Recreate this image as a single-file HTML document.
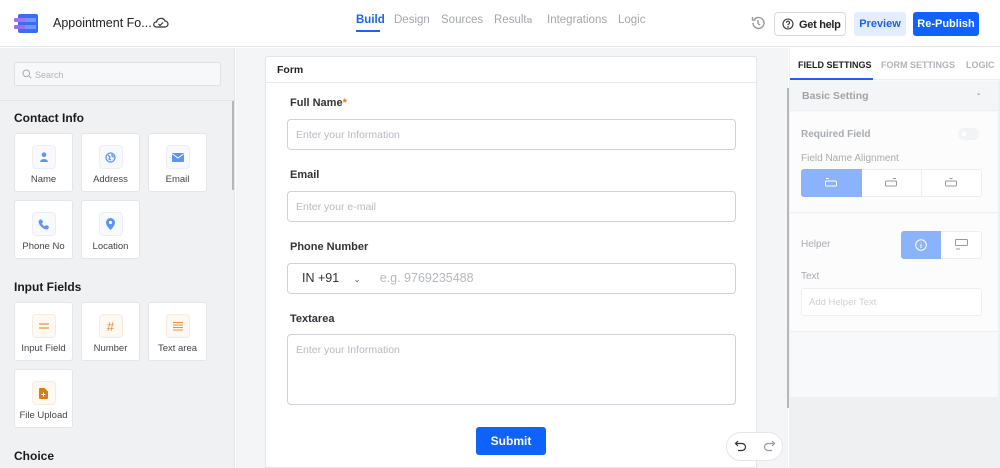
<!DOCTYPE html>
<html><head><meta charset="utf-8"><style>
*{box-sizing:border-box;margin:0;padding:0}
body{width:1000px;height:468px;overflow:hidden;font-family:"Liberation Sans",sans-serif;background:#fff;position:relative;color:#222}
.abs{position:absolute}
.hdr{left:0;top:0;width:1000px;height:47px;background:#fff;border-bottom:1px solid #e6e8eb}
.tab{top:14px;font-size:11.5px;color:#a3a7ad}
.left{left:0;top:48px;width:235px;height:420px;background:#f0f1f3;border-right:1px solid #e3e5e8}
.card{position:absolute;width:59px;height:59px;background:#fff;border:1px solid #e3e5e9;border-radius:3px;text-align:center;font-size:9.5px;color:#444}
.card .ic{width:24px;height:24px;margin:11px auto 5px;border:1px solid #eceef2;border-radius:4px;background:#f7f9fc;display:flex;align-items:center;justify-content:center}
.card .ic.o{background:#fdf8f2;border-color:#f5ece0}
.sec{font-size:12px;font-weight:bold;color:#1a1a1a;left:14px}
.center{left:236px;top:48px;width:552px;height:420px;background:#f4f5f7}
.form{left:265px;top:56px;width:492px;height:412px;background:#fff;border:1px solid #e3e5e9;border-radius:3px 3px 0 0}
.lbl{font-size:11px;font-weight:bold;color:#333;left:290px}
.inp{left:287px;width:449px;height:31px;border:1px solid #cfd2da;border-radius:4px;font-size:10.5px;color:#b5b9c3;padding:9px 8px}
.right{left:789px;top:48px;width:211px;height:420px;background:#eff0f2}
</style></head><body>
<div class="abs hdr"></div>
<svg class="abs" style="left:13px;top:13px" width="26" height="22"><rect x="5" y="1" width="20" height="19" rx="2" fill="#3b6cf6"/><rect x="1" y="5" width="12" height="4" rx="1" fill="#b06cf0"/><rect x="1" y="12" width="12" height="4" rx="1" fill="#9b6cf4"/><rect x="12" y="5" width="11" height="4" fill="#6f98fa"/><rect x="12" y="12" width="11" height="4" fill="#6f98fa"/></svg>
<div class="abs" style="left:53px;top:16px;font-size:12.5px;color:#222">Appointment Fo...</div>
<svg class="abs" style="left:152px;top:16px" width="17" height="14" fill="none" stroke="#333" stroke-width="1.2"><path d="M4 11h9a3 3 0 0 0 0-6 4.5 4.5 0 0 0-8.5 1A2.5 2.5 0 0 0 4 11z"/><path d="M6.5 8l1.5 1.5 3-3"/></svg>
<div class="abs tab" style="left:356px;color:#1a62f0;font-weight:bold">Build</div>
<div class="abs" style="left:356px;top:30px;width:24px;height:2px;background:#1a62f0"></div>
<div class="abs tab" style="left:394px">Design</div>
<div class="abs tab" style="left:441px">Sources</div>
<div class="abs tab" style="left:494px">Result<span style="font-size:8px">⧉</span></div>
<div class="abs tab" style="left:547px">Integrations</div>
<div class="abs tab" style="left:618px">Logic</div>
<svg class="abs" style="left:750px;top:15px" width="16" height="16" fill="none" stroke="#999" stroke-width="1.4"><path d="M3 8a5.5 5.5 0 1 0 1.6-3.9"/><path d="M2.5 2v3h3"/><path d="M8 5v3.5l2 1.5"/></svg>
<div class="abs" style="left:774px;top:12px;width:72px;height:24px;border:1px solid #d6d9de;border-radius:4px;font-size:11px;font-weight:bold;color:#222;padding:6px 0 0 24px;white-space:nowrap;letter-spacing:-0.3px">Get help</div>
<svg class="abs" style="left:782px;top:18px" width="12" height="12" fill="none" stroke="#333" stroke-width="1.1"><circle cx="6" cy="6" r="5"/><path d="M4.5 4.7a1.5 1.5 0 1 1 2 1.4c-.5.2-.5.6-.5 1"/><circle cx="6" cy="9" r=".3"/></svg>
<div class="abs" style="left:854px;top:12px;width:52px;height:24px;background:#e3edfd;border-radius:3px;color:#1a62f0;font-size:11px;font-weight:bold;text-align:center;line-height:24px">Preview</div>
<div class="abs" style="left:913px;top:12px;width:66px;height:24px;background:#0f62fe;border-radius:3px;color:#fff;font-size:11px;font-weight:bold;text-align:center;line-height:24px">Re-Publish</div>

<div class="abs left"></div>
<div class="abs" style="left:14px;top:62px;width:207px;height:24px;background:#f7f8f9;border:1px solid #dfe1e5;border-radius:3px;font-size:9px;color:#b0b4ba;padding:7px 0 0 20px">Search</div>
<svg class="abs" style="left:22px;top:69px" width="10" height="10" fill="none" stroke="#aaa" stroke-width="1"><circle cx="4.3" cy="4.3" r="3.3"/><path d="M6.8 6.8l2.5 2.5"/></svg>
<div class="abs" style="left:0;top:100px;width:235px;height:1px;background:#e2e4e8"></div>
<div class="abs" style="left:232px;top:101px;width:2px;height:89px;background:#b5b7bb"></div>
<div class="abs sec" style="top:111px">Contact Info</div>
<div class="card" style="left:14px;top:133px"><div class="ic"><svg width="10" height="10" fill="#5b95f5"><circle cx="5" cy="2.7" r="2.3"/><path d="M1 10a4 3 0 0 1 8 0z"/></svg></div>Name</div>
<div class="card" style="left:81px;top:133px"><div class="ic"><svg width="11" height="11" fill="none" stroke="#5b95f5" stroke-width="1.3"><circle cx="5.5" cy="5.5" r="4.5"/><path d="M3 3l2 2-1 2 2 1M7 2v2l2 1" /></svg></div>Address</div>
<div class="card" style="left:148px;top:133px"><div class="ic"><svg width="12" height="9"><rect width="12" height="9" rx="1" fill="#5b95f5"/><path d="M0.5 1l5.5 4 5.5-4" stroke="#fff" fill="none"/></svg></div>Email</div>
<div class="card" style="left:14px;top:200px"><div class="ic"><svg width="11" height="11" fill="#5b95f5"><path d="M2 0.5l2 .3 1 2.5-1.3 1.2a7 7 0 0 0 3 3L8 6l2.5 1 .3 2-1.5 1.5C5 10.5.5 6 .5 2z"/></svg></div>Phone No</div>
<div class="card" style="left:81px;top:200px"><div class="ic"><svg width="9" height="12" fill="#5b95f5"><path d="M4.5 0A4.5 4.5 0 0 1 9 4.5C9 8 4.5 12 4.5 12S0 8 0 4.5A4.5 4.5 0 0 1 4.5 0z"/><circle cx="4.5" cy="4.5" r="1.6" fill="#fff"/></svg></div>Location</div>
<div class="abs sec" style="top:280px">Input Fields</div>
<div class="card" style="left:14px;top:302px"><div class="ic o"><svg width="10" height="6" stroke="#e8953a" stroke-width="1.2"><path d="M0 1h10M0 5h10"/></svg></div>Input Field</div>
<div class="card" style="left:81px;top:302px"><div class="ic o" style="color:#e08a2e;font-size:13px">#</div>Number</div>
<div class="card" style="left:148px;top:302px"><div class="ic o"><svg width="10" height="9" stroke="#e8953a" stroke-width="1"><path d="M0 .5h10M0 3h10M0 5.5h10M0 8h10"/></svg></div>Text area</div>
<div class="card" style="left:14px;top:369px"><div class="ic o"><svg width="9" height="11"><path d="M0 1a1 1 0 0 1 1-1h4.5L9 3.5V10a1 1 0 0 1-1 1H1a1 1 0 0 1-1-1z" fill="#d97e14"/><path d="M4.5 4.5v4M2.5 6.5h4" stroke="#fff"/></svg></div>File Upload</div>
<div class="abs sec" style="top:449px">Choice</div>

<div class="abs center"></div>
<div class="abs form"></div>
<div class="abs" style="left:266px;top:82px;width:490px;height:1px;background:#e6e8ec"></div>
<div class="abs" style="left:277px;top:64px;font-size:10.5px;font-weight:bold;color:#222">Form</div>
<div class="abs lbl" style="top:97px">Full Name<span style="color:#e07b12">*</span></div>
<div class="abs inp" style="top:119px">Enter your Information</div>
<div class="abs lbl" style="top:169px">Email</div>
<div class="abs inp" style="top:191px">Enter your e-mail</div>
<div class="abs lbl" style="top:241px">Phone Number</div>
<div class="abs inp" style="top:263px;font-size:12.5px;padding:7px 0 0 14px"><span style="color:#333">IN +91</span><span style="color:#666;font-size:9px;margin-left:14px">⌄</span><span style="margin-left:19px">e.g. 9769235488</span></div>
<div class="abs lbl" style="top:313px">Textarea</div>
<div class="abs inp" style="top:334px;height:71px">Enter your Information</div>
<div class="abs" style="left:476px;top:427px;width:70px;height:28px;background:#0f62fe;border-radius:3px;color:#fff;font-size:12px;font-weight:bold;text-align:center;line-height:28px">Submit</div>
<div class="abs" style="left:726px;top:432px;width:57px;height:29px;background:#fff;border:1px solid #e3e5e9;border-radius:15px"></div>
<svg class="abs" style="left:734px;top:440px" width="14" height="12" fill="none" stroke="#333" stroke-width="1.2"><path d="M4 1L1.5 3.5 4 6"/><path d="M1.5 3.5H8a3.5 3.5 0 0 1 0 7H4"/></svg>
<svg class="abs" style="left:762px;top:440px" width="14" height="12" fill="none" stroke="#999" stroke-width="1.2"><path d="M10 1l2.5 2.5L10 6"/><path d="M12.5 3.5H6a3.5 3.5 0 0 0 0 7h4"/></svg>
<div class="abs" style="left:787px;top:88px;width:2px;height:320px;background:#b5b7bb"></div>

<div class="abs right"></div>
<div class="abs" style="left:790px;top:48px;width:208px;height:349px;background:#f8f9fa"></div>
<div class="abs" style="left:790px;top:48px;width:210px;height:32px;background:#fff;border-bottom:1px solid #eceef1"></div>
<div class="abs" style="left:798px;top:60px;font-size:9px;font-weight:bold;color:#222">FIELD SETTINGS</div>
<div class="abs" style="left:881px;top:60px;font-size:9px;font-weight:bold;color:#b0b3b9">FORM SETTINGS</div>
<div class="abs" style="left:966px;top:60px;font-size:9px;font-weight:bold;color:#b0b3b9">LOGIC</div>
<div class="abs" style="left:790px;top:78px;width:83px;height:2px;background:#1a62f0"></div>
<div class="abs" style="left:790px;top:81px;width:208px;height:30px;background:#f4f5f7;border-bottom:1px solid #eceef1"></div>
<div class="abs" style="left:802px;top:90px;font-size:10.5px;font-weight:bold;color:#a0a4aa">Basic Setting</div>
<div class="abs" style="left:977px;top:89px;font-size:10px;color:#777">-</div>
<div class="abs" style="left:790px;top:112px;width:208px;height:101px;background:#fcfcfd;border-bottom:1px solid #eceef1"></div>
<div class="abs" style="left:801px;top:129px;font-size:10px;font-weight:bold;color:#a8abb0">Required Field</div>
<div class="abs" style="left:958px;top:128px;width:21px;height:12px;border-radius:6px;background:#f2f3f5"></div>
<div class="abs" style="left:962px;top:132px;width:4px;height:4px;border-radius:2px;background:#fff"></div>
<div class="abs" style="left:801px;top:153px;font-size:10px;color:#a8abb0">Field Name Alignment</div>
<div class="abs" style="left:801px;top:169px;width:181px;height:28px;border:1px solid #eceef1;border-radius:3px;background:#fff"></div>
<div class="abs" style="left:801px;top:169px;width:61px;height:28px;background:#8ab3fc;border-radius:3px 0 0 3px"></div>
<div class="abs" style="left:921px;top:170px;width:1px;height:26px;background:#eceef1"></div>
<svg class="abs" style="left:825px;top:178px" width="12" height="9" fill="none" stroke="#fff"><path d="M1 .5h3"/><rect x=".5" y="3" width="11" height="5" rx="1"/></svg>
<svg class="abs" style="left:885px;top:178px" width="12" height="9" fill="none" stroke="#999"><path d="M8 .5h3"/><rect x=".5" y="3" width="11" height="5" rx="1"/></svg>
<svg class="abs" style="left:945px;top:178px" width="12" height="9" fill="none" stroke="#999"><path d="M4.5 .5h3"/><rect x=".5" y="3" width="11" height="5" rx="1"/></svg>
<div class="abs" style="left:790px;top:214px;width:208px;height:118px;background:#fcfcfd;border-bottom:1px solid #eceef1"></div>
<div class="abs" style="left:801px;top:239px;font-size:10px;color:#a8abb0">Helper</div>
<div class="abs" style="left:901px;top:231px;width:81px;height:28px;border:1px solid #eceef1;border-radius:3px;background:#fff"></div>
<div class="abs" style="left:901px;top:231px;width:40px;height:28px;background:#8ab3fc;border-radius:3px 0 0 3px"></div>
<svg class="abs" style="left:915px;top:239px" width="12" height="12" fill="none" stroke="#fff"><circle cx="6" cy="6" r="5.3"/><path d="M6 5v4M6 3v.5"/></svg>
<svg class="abs" style="left:955px;top:239px" width="13" height="11" fill="none" stroke="#999"><rect x=".5" y=".5" width="12" height="6" rx="1"/><path d="M1 10h4"/></svg>
<div class="abs" style="left:801px;top:271px;font-size:10px;color:#a8abb0">Text</div>
<div class="abs" style="left:801px;top:288px;width:181px;height:28px;border:1px solid #eceef1;border-radius:3px;background:#fff;font-size:9.5px;color:#ccd0d5;padding:8px 7px">Add Helper Text</div>
</body></html>
